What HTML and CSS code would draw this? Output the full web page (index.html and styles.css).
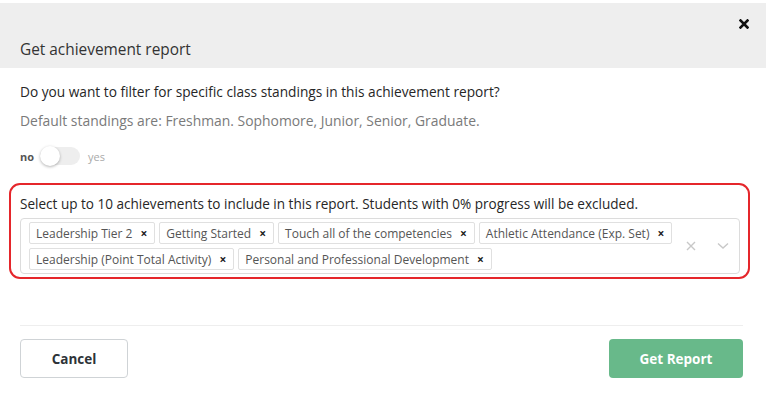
FILE: index.html
```html
<!DOCTYPE html>
<html lang="en">
<head>
    <meta charset="UTF-8">
    <title>Get achievement report</title>
    <link rel="stylesheet" href="styles.css">
</head>
<body>
    <div class="modal">
        <div class="modal-header">
            <h2>Get achievement report</h2>
            <button class="close" aria-label="Close">
                <svg width="10" height="10" viewBox="0 0 10 10"><path d="M1.5 1.5 L8.5 8.5 M8.5 1.5 L1.5 8.5" stroke="#111" stroke-width="2.6" stroke-linecap="square"/></svg>
            </button>
        </div>

        <div class="modal-body">
            <p class="question">Do you want to filter for specific class standings in this achievement report?</p>
            <p class="hint">Default standings are: Freshman. Sophomore, Junior, Senior, Graduate.</p>

            <div class="toggle-row">
                <span class="toggle-no">no</span>
                <span class="toggle"><span class="knob"></span></span>
                <span class="toggle-yes">yes</span>
            </div>

            <div class="highlight">
                <p class="select-label">Select up to 10 achievements to include in this report. Students with 0% progress will be excluded.</p>
                <div class="select">
                    <div class="chips">
                        <span class="chip">Leadership Tier 2 <b>×</b></span>
                        <span class="chip">Getting Started <b>×</b></span>
                        <span class="chip">Touch all of the competencies <b>×</b></span>
                        <span class="chip">Athletic Attendance (Exp. Set) <b>×</b></span>
                        <span class="chip">Leadership (Point Total Activity) <b>×</b></span>
                        <span class="chip">Personal and Professional Development <b>×</b></span>
                    </div>
                    <div class="indicators">
                        <svg width="10" height="10" viewBox="0 0 10 10"><path d="M1 1 L9 9 M9 1 L1 9" stroke="#c8c8c8" stroke-width="1.4"/></svg>
                        <svg width="12" height="8" viewBox="0 0 12 8"><path d="M1 1.5 L6 6 L11 1.5" stroke="#c8c8c8" stroke-width="1.4" fill="none"/></svg>
                    </div>
                </div>
            </div>
        </div>

        <div class="modal-footer">
            <button class="btn btn-cancel">Cancel</button>
            <button class="btn btn-primary">Get Report</button>
        </div>
    </div>
</body>
</html>
```

FILE: styles.css
```css
:root {
    --text-dark: #262626;
    --text-muted: #7a7a7a;
    --border: #dcdcdc;
    --accent: #68b98a;
    --alert: #e5262b;
}

body {
    margin: 0;
    font-family: 'Open Sans', 'Noto Sans', sans-serif;
    color: var(--text-dark);
    background: #fff;
}

.modal {
    width: 766px;
    padding-top: 3px;
}

.modal-header {
    position: relative;
    background: #eeeeee;
    height: 65px;
    padding: 0 20px;
}

.modal-header h2 {
    margin: 0;
    padding-top: 36px;
    font-size: 15.4px;
    font-weight: 400;
    color: #333;
}

.close {
    position: absolute;
    top: 14px;
    right: 17px;
    border: none;
    background: none;
    padding: 0;
    cursor: pointer;
}

.modal-body {
    padding: 13px 20px 0;
}

.question {
    margin: 0;
    font-size: 13.7px;
    font-weight: 500;
    line-height: 22px;
}

.hint {
    margin: 7px 0 0;
    font-size: 13.9px;
    line-height: 22px;
    color: var(--text-muted);
}

.toggle-row {
    display: flex;
    align-items: center;
    margin-top: 14px;
    height: 20px;
    font-size: 11px;
}

.toggle-no {
    font-weight: 700;
    color: #555;
}

.toggle {
    position: relative;
    width: 40px;
    height: 18px;
    margin: 0 8px 0 6px;
    border-radius: 10px;
    background: #eee;
}

.knob {
    position: absolute;
    left: 0;
    top: -1px;
    width: 20px;
    height: 20px;
    border-radius: 50%;
    background: #fff;
    box-shadow: 0 1px 3px rgba(0, 0, 0, 0.3);
}

.toggle-yes {
    color: #aaa;
}

.highlight {
    margin: 17px 0 0 -11px;
    width: 720px;
    padding: 9px 8px 3px 9px;
    border: 2.5px solid var(--alert);
    border-radius: 11px;
}

.select-label {
    margin: 0 0 4px;
    font-size: 13.55px;
    line-height: 20px;
}

.select {
    display: flex;
    align-items: center;
    border: 1px solid var(--border);
    border-radius: 4px;
    min-height: 54px;
}

.chips {
    flex: 1;
    display: flex;
    flex-wrap: wrap;
    gap: 4px 4px;
    padding: 3px 8px;
}

.chip {
    display: inline-flex;
    align-items: center;
    height: 20px;
    padding: 0 7px 0 6px;
    border: 1px solid #e0e0e0;
    border-radius: 2px;
    font-size: 12px;
    color: #555;
}

.chip b {
    margin-left: 8px;
    font-size: 12px;
    color: #222;
}

.indicators {
    display: flex;
    align-items: center;
    gap: 21px;
    padding-right: 10px;
}

.modal-footer {
    display: flex;
    justify-content: space-between;
    margin: 46px 23px 0 20px;
    padding-top: 13px;
    border-top: 1px solid #eee;
}

.btn {
    height: 39px;
    border-radius: 4px;
    font-family: inherit;
    font-size: 13.5px;
    font-weight: 700;
    cursor: pointer;
}

.btn-cancel {
    width: 108px;
    background: #fff;
    border: 1px solid #cfd3d6;
    color: #2d3338;
}

.btn-primary {
    width: 134px;
    background: var(--accent);
    border: none;
    color: #fff;
}
```
